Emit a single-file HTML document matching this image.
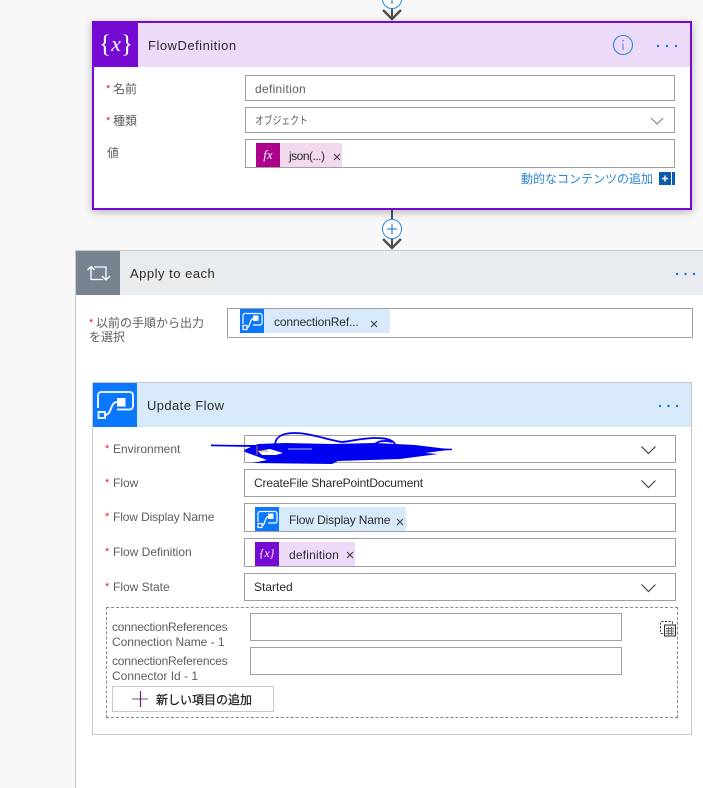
<!DOCTYPE html>
<html lang="ja">
<head>
<meta charset="utf-8">
<style>
html,body{margin:0;padding:0;background:#f8f8f8;}
#page{position:relative;width:703px;height:788px;overflow:hidden;background:#f8f8f8;font-family:"Liberation Sans","Noto Sans CJK JP",sans-serif;color:#444;}
#page div{position:absolute;box-sizing:border-box;}
.t{white-space:nowrap;font-size:12px;line-height:16px;}
.lbl{color:#5d5d5d;}
.star{color:#e8212b;font-size:11px;}
.inp{background:#fff;border:1px solid #a0a0a0;}
.dark{color:#2b2b2b;}
.h{font-size:13px;letter-spacing:.5px;}
svg{position:absolute;overflow:visible;}
</style>
</head>
<body>
<div id="page">

<!-- Connectors -->
<svg style="left:0;top:0" width="703" height="260">
  <path d="M392 0V19" stroke="#505050" stroke-width="2" fill="none"/>
  <path d="M383 10l9 9 9-9" stroke="#505050" stroke-width="2.500" fill="none"/>
  <circle cx="392" cy="-1" r="9.500" fill="#fff" stroke="#2d88e0" stroke-width="1"/>
  <path d="M392 -6V4M387 -1H397" stroke="#2d88e0" stroke-width="1.200"/>
  <path d="M392 210V247" stroke="#505050" stroke-width="2" fill="none"/>
  <path d="M383 239l9 9 9-9" stroke="#505050" stroke-width="2.500" fill="none"/>
  <circle cx="392" cy="229" r="9.500" fill="#fff" stroke="#2d88e0" stroke-width="1"/>
  <path d="M392 224V234M387 229H397" stroke="#2d88e0" stroke-width="1.200"/>
</svg>

<!-- FlowDefinition card -->
<div style="left:92px;top:21px;width:600px;height:189px;background:#fff;border:2px solid #750bd2;box-shadow:0 2px 8px rgba(0,0,0,.28);"></div>
<div style="left:94px;top:23px;width:596px;height:44px;background:#ecdaf8;"></div>
<div style="left:94px;top:23px;width:44px;height:44px;background:#750bd2;"></div>
<svg style="left:94px;top:23px" width="44" height="44">
  <text x="11" y="29" text-anchor="middle" fill="#fff" font-family="Liberation Serif" font-size="25">{</text>
  <text x="22" y="28" text-anchor="middle" fill="#fff" font-family="Liberation Serif" font-style="italic" font-size="22">x</text>
  <text x="33" y="29" text-anchor="middle" fill="#fff" font-family="Liberation Serif" font-size="25">}</text>
</svg>
<div class="t dark h" style="left:148px;top:38px;">FlowDefinition</div>
<svg style="left:612px;top:34px" width="22" height="22">
  <circle cx="11" cy="11" r="9.500" fill="none" stroke="#2c86e0" stroke-width="1.100"/>
  <path d="M11 9.500V16" stroke="#7f8fe0" stroke-width="1.400"/>
  <circle cx="11" cy="6.800" r=".9" fill="#7f8fe0"/>
</svg>
<svg style="left:656px;top:44px" width="24" height="4">
  <circle cx="2" cy="2" r="1.200" fill="#0f78e0"/><circle cx="11" cy="2" r="1.200" fill="#0f78e0"/><circle cx="20" cy="2" r="1.200" fill="#0f78e0"/>
</svg>

<div class="t star" style="left:106px;top:81px;">*</div>
<div class="t lbl" style="left:113px;top:81px;">名前</div>
<div class="t star" style="left:106px;top:113px;">*</div>
<div class="t lbl" style="left:113px;top:113px;">種類</div>
<div class="t lbl" style="left:107px;top:145px;">値</div>

<div class="inp" style="left:245px;top:75px;width:430px;height:26px;"></div>
<div class="t lbl" style="left:255px;top:81px;letter-spacing:.3px;">definition</div>
<div class="inp" style="left:245px;top:107px;width:430px;height:26px;"></div>
<div class="t lbl" style="left:255px;top:113px;font-size:11px;transform:scaleX(.8);transform-origin:left center;">オブジェクト</div>
<svg style="left:650px;top:117px" width="14" height="8"><path d="M1 1l6 6 6-6" fill="none" stroke="#7a7a7a" stroke-width="1"/></svg>
<div class="inp" style="left:245px;top:139px;width:430px;height:29px;"></div>
<div style="left:256px;top:143px;width:86px;height:24px;background:#f3d9ee;"></div>
<div style="left:256px;top:143px;width:24px;height:24px;background:#ad008c;"></div>
<div class="t" style="left:256px;top:147px;width:24px;text-align:center;color:#fff;font-family:'Liberation Serif',serif;font-style:italic;font-size:13px;">fx</div>
<div class="t dark" style="left:289px;top:148px;letter-spacing:-.5px;">json(...)</div>
<svg style="left:333px;top:153px" width="8" height="8"><path d="M1 1l6 6M7 1l-6 6" stroke="#444" stroke-width="1.200"/></svg>

<div class="t" style="left:521px;top:171px;color:#2a86d8;">動的なコンテンツの追加</div>
<div style="left:659px;top:172px;width:12px;height:13px;background:#0a5bb0;"></div>
<div style="left:672px;top:172px;width:3px;height:13px;background:#0a5bb0;"></div>
<svg style="left:659px;top:172px" width="12" height="13"><path d="M6 3.500v6M3 6.500h6" stroke="#fff" stroke-width="1.500"/></svg>

<!-- Apply to each -->
<div style="left:75px;top:250px;width:640px;height:560px;background:#fff;border:1px solid #c8c8c8;"></div>
<div style="left:76px;top:251px;width:640px;height:44px;background:#e9ecef;"></div>
<div style="left:76px;top:251px;width:44px;height:44px;background:#788391;"></div>
<svg style="left:76px;top:251px" width="44" height="44">
  <path d="M11.500 19l3.500-3.500 3.500 3.500M15 16V28.500H27" fill="none" stroke="#fff" stroke-width="1.300"/>
  <path d="M18 16H30V28.500M26 25l4 4 4-4" fill="none" stroke="#fff" stroke-width="1.300"/>
</svg>
<div class="t dark h" style="left:130px;top:266px;">Apply to each</div>
<svg style="left:675px;top:272px" width="24" height="4">
  <circle cx="2" cy="2" r="1.200" fill="#0f78e0"/><circle cx="10.500" cy="2" r="1.200" fill="#0f78e0"/><circle cx="19" cy="2" r="1.200" fill="#0f78e0"/>
</svg>
<div class="t star" style="left:89px;top:315px;">*</div>
<div class="t lbl" style="left:96px;top:315px;">以前の手順から出力</div>
<div class="t lbl" style="left:89px;top:329px;">を選択</div>
<div class="inp" style="left:227px;top:308px;width:466px;height:30px;"></div>
<div style="left:240px;top:309px;width:150px;height:24px;background:#d8eafa;"></div>
<div style="left:240px;top:309px;width:24px;height:24px;background:#0a77ff;"></div>
<svg style="left:240px;top:309px" width="24" height="24">
  <path d="M3 15V6.500A2 2 0 0 1 5 4.500H20A2 2 0 0 1 22 6.500V14A2 2 0 0 1 20 16H13" fill="none" stroke="#fff" stroke-width="1.200"/>
  <rect x="13" y="6.500" width="5.500" height="5.500" fill="#fff"/>
  <rect x="3" y="16.500" width="4" height="4" fill="none" stroke="#fff" stroke-width="1.200"/>
  <path d="M7 18.500c3.500 0 2.500-9 6.500-9" fill="none" stroke="#fff" stroke-width="1.200"/>
</svg>
<div class="t dark" style="left:274px;top:314px;letter-spacing:-.13px;">connectionRef...</div>
<svg style="left:370px;top:320px" width="8" height="8"><path d="M1 1l6 6M7 1l-6 6" stroke="#444" stroke-width="1.200"/></svg>

<!-- Update Flow -->
<div style="left:92px;top:382px;width:600px;height:353px;background:#fff;border:1px solid #c8c8c8;"></div>
<div style="left:93px;top:383px;width:598px;height:44px;background:#d8eafa;"></div>
<div style="left:93px;top:383px;width:44px;height:44px;background:#0a77ff;"></div>
<svg style="left:93px;top:383px" width="44" height="44">
  <path d="M5 25V12A3.500 3.500 0 0 1 8.500 9H37A3.500 3.500 0 0 1 40 12V23A3.500 3.500 0 0 1 37 26.500H24" fill="none" stroke="#fff" stroke-width="1.800"/>
  <rect x="24" y="15" width="8.500" height="8.500" fill="#fff"/>
  <rect x="5.500" y="29" width="6.500" height="6" fill="none" stroke="#fff" stroke-width="1.800"/>
  <path d="M12 32c7 0 5-13 12-13" fill="none" stroke="#fff" stroke-width="1.800"/>
</svg>
<div class="t dark h" style="left:147px;top:398px;letter-spacing:.4px;">Update Flow</div>
<svg style="left:658px;top:404px" width="24" height="4">
  <circle cx="2" cy="2" r="1.200" fill="#0f78e0"/><circle cx="10.500" cy="2" r="1.200" fill="#0f78e0"/><circle cx="19" cy="2" r="1.200" fill="#0f78e0"/>
</svg>

<div class="t star" style="left:105px;top:441px;">*</div>
<div class="t lbl" style="left:113px;top:441px;">Environment</div>
<div class="t star" style="left:105px;top:475px;">*</div>
<div class="t lbl" style="left:113px;top:475px;">Flow</div>
<div class="t star" style="left:105px;top:509px;">*</div>
<div class="t lbl" style="left:113px;top:509px;letter-spacing:-.12px;">Flow Display Name</div>
<div class="t star" style="left:105px;top:544px;">*</div>
<div class="t lbl" style="left:113px;top:544px;">Flow Definition</div>
<div class="t star" style="left:105px;top:579px;">*</div>
<div class="t lbl" style="left:113px;top:579px;">Flow State</div>

<div class="inp" style="left:244px;top:435px;width:432px;height:28px;"></div>
<div class="inp" style="left:244px;top:469px;width:432px;height:28px;"></div>
<div class="t dark" style="left:254px;top:475px;letter-spacing:-.13px;">CreateFile SharePointDocument</div>
<div class="inp" style="left:244px;top:503px;width:432px;height:29px;"></div>
<div class="inp" style="left:244px;top:538px;width:432px;height:29px;"></div>
<div class="inp" style="left:244px;top:573px;width:432px;height:28px;"></div>
<div class="t dark" style="left:254px;top:579px;">Started</div>

<svg style="left:640px;top:445px" width="18" height="10"><path d="M1.500 1.500L8.500 8.500 15.500 1.500" fill="none" stroke="#444" stroke-width="1.200"/></svg>
<svg style="left:640px;top:479px" width="18" height="10"><path d="M1.500 1.500L8.500 8.500 15.500 1.500" fill="none" stroke="#444" stroke-width="1.200"/></svg>
<svg style="left:640px;top:583px" width="18" height="10"><path d="M1.500 1.500L8.500 8.500 15.500 1.500" fill="none" stroke="#444" stroke-width="1.200"/></svg>

<div style="left:255px;top:507px;width:151px;height:24px;background:#d8eafa;"></div>
<div style="left:255px;top:507px;width:24px;height:24px;background:#0a77ff;"></div>
<svg style="left:255px;top:507px" width="24" height="24">
  <path d="M3 15V6.500A2 2 0 0 1 5 4.500H20A2 2 0 0 1 22 6.500V14A2 2 0 0 1 20 16H13" fill="none" stroke="#fff" stroke-width="1.200"/>
  <rect x="13" y="6.500" width="5.500" height="5.500" fill="#fff"/>
  <rect x="3" y="16.500" width="4" height="4" fill="none" stroke="#fff" stroke-width="1.200"/>
  <path d="M7 18.500c3.500 0 2.500-9 6.500-9" fill="none" stroke="#fff" stroke-width="1.200"/>
</svg>
<div class="t dark" style="left:289px;top:512px;letter-spacing:-.12px;">Flow Display Name</div>
<svg style="left:396px;top:518px" width="8" height="8"><path d="M1 1l6 6M7 1l-6 6" stroke="#444" stroke-width="1.200"/></svg>

<div style="left:255px;top:542px;width:100px;height:24px;background:#ecdaf8;"></div>
<div style="left:255px;top:542px;width:24px;height:24px;background:#750bd2;"></div>
<svg style="left:255px;top:542px" width="24" height="24">
  <text x="12" y="15" text-anchor="middle" fill="#fff" font-family="Liberation Serif" font-style="italic" font-size="12">{x}</text>
</svg>
<div class="t dark" style="left:289px;top:547px;letter-spacing:.2px;">definition</div>
<svg style="left:346px;top:551px" width="8" height="8"><path d="M1 1l6 6M7 1l-6 6" stroke="#444" stroke-width="1.200"/></svg>

<!-- Scribble -->
<svg style="left:0;top:0" width="703" height="788">
  <path d="M244 450L258 444 285 443 332 444 375 443 415 445 452 449.500 425 453 438 454 400 459 338 461 332 464 252 463 267 460 245 452Z" fill="#0000f0"/>
  <path d="M211 445.500L300 446M211 445.500L452 449.500" fill="none" stroke="#0000f0" stroke-width="1.600"/>
  <path d="M275 444C276 436 283 433 295 433C310 433 328 440 342 442C352 441 364 438 375 438C384 438 392 439 395 444M375 444C378 441 385 440 392 442" fill="none" stroke="#0000f0" stroke-width="1.800"/>
  <path d="M258 451L270 449 283 453 276 455 262 455Z" fill="#fff"/>
  <path d="M257 446V455M260 451h8" stroke="#c98a3a" stroke-width="1"/>
  <path d="M288 449H312" stroke="#b9c0f5" stroke-width="1"/>
</svg>

<!-- Dashed array section -->
<div style="left:106px;top:607px;width:572px;height:111px;border:1px dashed #8a8a8a;"></div>
<div class="t lbl" style="left:112px;top:620px;line-height:15px;letter-spacing:-.2px;">connectionReferences<br><span style="letter-spacing:-.05px">Connection Name - 1</span></div>
<div class="t lbl" style="left:112px;top:654px;line-height:15px;letter-spacing:-.2px;">connectionReferences<br><span style="letter-spacing:0">Connector Id - 1</span></div>
<div class="inp" style="left:250px;top:613px;width:372px;height:28px;"></div>
<div class="inp" style="left:250px;top:647px;width:372px;height:28px;"></div>
<svg style="left:659px;top:620px" width="18" height="18">
  <rect x="1.500" y="1.500" width="12" height="12" rx="1" fill="none" stroke="#333" stroke-width="1" stroke-dasharray="2 1.500"/>
  <rect x="5.500" y="5" width="11" height="11" fill="#e8e8e8" stroke="#333" stroke-width="1"/>
  <path d="M7 8.500h8M7 11h8M7 13.500h8M9.500 7v8M12.500 7v8" stroke="#555" stroke-width=".8"/>
</svg>
<div style="left:112px;top:686px;width:162px;height:26px;background:#fff;border:1px solid #c8c8c8;"></div>
<svg style="left:132px;top:691px" width="17" height="17"><path d="M0 8H16" stroke="#777" stroke-width="1.200"/><path d="M8.500 0V16" stroke="#7a1a80" stroke-width="1.200"/></svg>
<div class="t" style="left:156px;top:692px;color:#222;-webkit-text-stroke:.25px #222;">新しい項目の追加</div>

</div>
</body>
</html>
